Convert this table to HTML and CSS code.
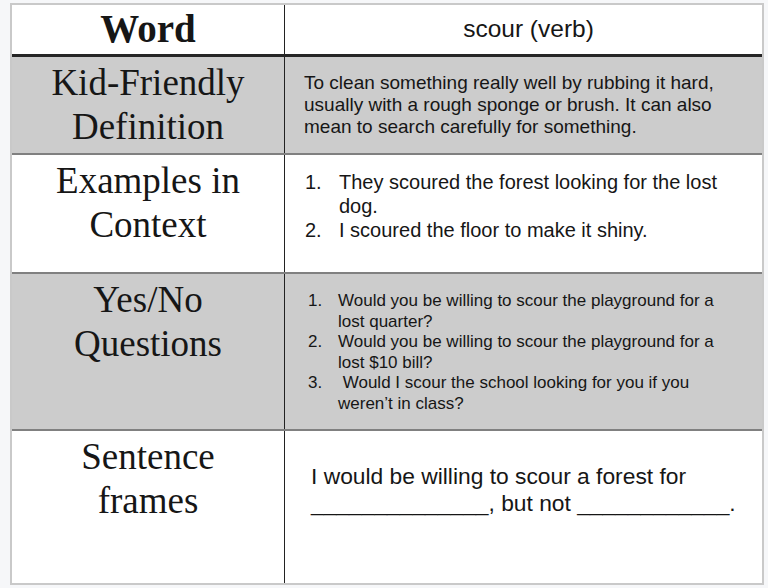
FILE: index.html
```html
<!DOCTYPE html>
<html>
<head>
<meta charset="utf-8">
<link rel="stylesheet" href="styles.css">
</head>
<body>
<div class="sheet">
  <div class="row head">
    <div class="label word">Word</div>
    <div class="cell term">scour (verb)</div>
  </div>
  <div class="row gray r1">
    <div class="label l1">Kid-Friendly<br>Definition</div>
    <div class="cell def">To clean something really well by rubbing it hard, usually with a rough sponge or brush. It can also mean to search carefully for something.</div>
  </div>
  <div class="row r2">
    <div class="label">Examples in<br>Context</div>
    <div class="cell ex">
      <ol class="list big">
        <li><span class="num">1.</span><span class="txt">They scoured the forest looking for the lost dog.</span></li>
        <li><span class="num">2.</span><span class="txt">I scoured the floor to make it shiny.</span></li>
      </ol>
    </div>
  </div>
  <div class="row gray r3">
    <div class="label">Yes/No<br>Questions</div>
    <div class="cell yn">
      <ol class="list small">
        <li><span class="num">1.</span><span class="txt">Would you be willing to scour the playground for a lost quarter?</span></li>
        <li><span class="num">2.</span><span class="txt">Would you be willing to scour the playground for a lost $10 bill?</span></li>
        <li><span class="num">3.</span><span class="txt">&nbsp;Would I scour the school looking for you if you weren’t in class?</span></li>
      </ol>
    </div>
  </div>
  <div class="row r4">
    <div class="label">Sentence<br>frames</div>
    <div class="cell frame">I would be willing to scour a forest for ______________, but not ____________.</div>
  </div>
</div>
</body>
</html>
```
FILE: styles.css
```css
html, body {
  margin: 0;
  padding: 0;
  background: #f6f7f9;
}
.sheet {
  margin: 3px 0 0 10px;
  width: 750px;
  border: 2px solid #c9c9c9;
  background: #fff;
  color: #161616;
}
.row {
  display: grid;
  grid-template-columns: 273px 1fr;
  border-bottom: 2px solid #808080;
}
.row.r4 { border-bottom: none; height: 152px; }
.row.head { height: 49px; border-bottom: 3px solid #262626; }
.row.r1 { height: 96px; }
.row.r2 { height: 117px; }
.row.r3 { height: 155px; }
.gray { background: #cccccc; }
.label {
  border-right: 1px solid #222;
  font-family: "Liberation Serif", "Times New Roman", serif;
  font-size: 37px;
  line-height: 44px;
  text-align: center;
  padding-top: 4px;
}
.label.word { font-weight: bold; padding-top: 2px; font-size: 39px; }
.label.l1 { padding-top: 4px; }
.cell {
  font-family: "Liberation Sans", Arial, sans-serif;
}
.term {
  font-size: 24.5px;
  display: flex;
  align-items: center;
  justify-content: center;
  padding: 0 0 2px 10px;
}
.def {
  font-size: 19px;
  line-height: 22px;
  display: flex;
  align-items: center;
  padding: 0 18px 0 19px;
}
.list {
  list-style: none;
  margin: 0;
  padding: 0;
}
.list li {
  display: flex;
}
.num {
  flex: 0 0 auto;
}
.txt {
  flex: 1;
}
.ex {
  padding: 15px 22px 0 20px;
  font-size: 20px;
  line-height: 24px;
}
.ex .num { width: 34px; }
.yn {
  padding: 17px 24px 0 23px;
  font-size: 17px;
  line-height: 20.5px;
}
.yn .num { width: 30px; }
.frame {
  padding: 32px 14px 0 26px;
  font-size: 22.8px;
  line-height: 27px;
}
```
